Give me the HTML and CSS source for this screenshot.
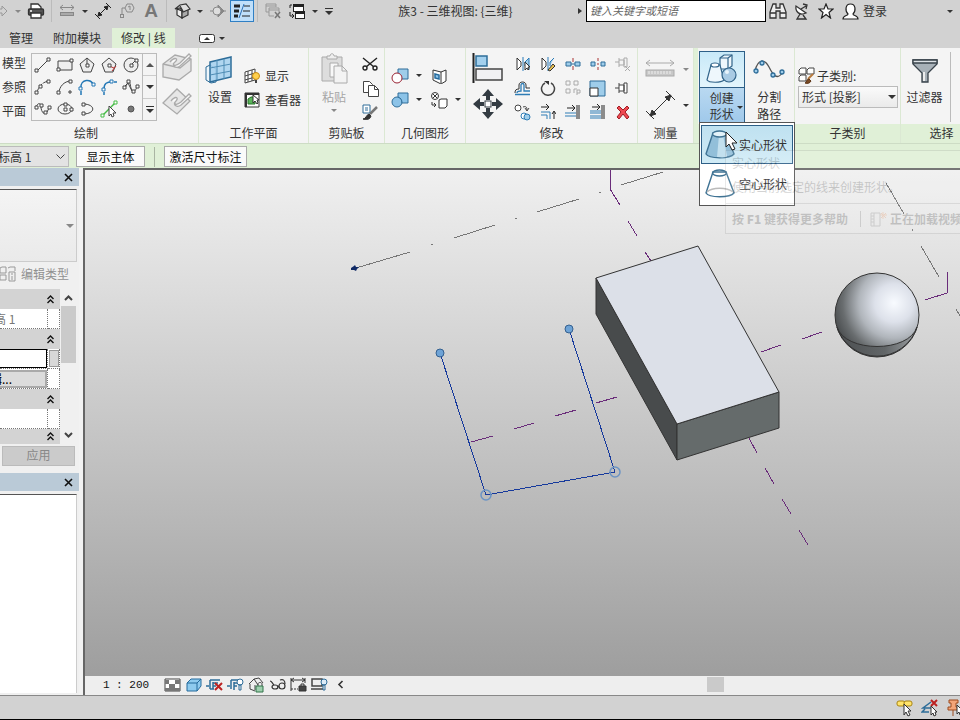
FILE: index.html
```html
<!DOCTYPE html>
<html lang="zh-CN">
<head>
  <meta charset="UTF-8">
  <meta name="viewport" content="width=device-width, initial-scale=1.0">
  <title>族3 - 三维视图: {三维}</title>
  <link rel="stylesheet" href="styles.css">
</head>
<body>
<div class="window">

  <header class="titlebar">
    <div class="quick">
      <button class="tool first" aria-label="重做"><svg width="16" height="16" viewBox="0 0 16 16" fill="none" stroke="#999"><path d="M2 6h6V3l5 5-5 5v-3H2z"/></svg></button>
      <button class="drop" aria-label="重做列表"><span class="caret dim"></span></button>
      <button class="tool" aria-label="打印"><svg width="18" height="16" viewBox="0 0 18 16" fill="none" stroke="#333" stroke-width="1.3"><path d="M4 6V1h7l3 3v2" fill="#fff"/><rect x="1.500" y="6" width="15" height="6" rx="1" fill="#555"/><path d="M4 10h10v5H4z" fill="#fff"/><path d="M3 8h2" stroke="#fff"/></svg></button>
      <span class="sep"></span>
      <button class="tool" aria-label="测量"><svg width="16" height="14" viewBox="0 0 16 14" fill="none" stroke="#888"><path d="M1 3.500h14M4 1L1 3.500 4 6M12 1l3 2.500L12 6"/><rect x="1.500" y="8.500" width="13" height="3" fill="#aaa"/></svg></button>
      <button class="drop" aria-label="测量列表"><span class="caret"></span></button>
      <button class="tool" aria-label="对齐尺寸标注"><svg width="18" height="18" viewBox="0 0 18 18" fill="none" stroke="#222"><path d="M4 14L14 4M1 12l5 5M12 1l5 5"/><path d="M4 14l1-4 3 3zM14 4l-4 1 3 3z" fill="#222"/></svg></button>
      <button class="tool" aria-label="标记"><svg width="16" height="16" viewBox="0 0 16 16" fill="none" stroke="#888"><path d="M8 1h5l2 4-2 4H8L6 5zM6 5H3v6"/><rect x="1.500" y="11.500" width="3" height="3"/><path d="M9 4l2-1v4"/></svg></button>
      <button class="tool letter" aria-label="文字">A</button>
      <span class="sep"></span>
      <button class="tool" aria-label="三维视图"><svg width="17" height="16" viewBox="0 0 17 16" stroke="#333" stroke-width="1.200"><path d="M3 6v6l5 3V8z" fill="#eee"/><path d="M8 8v7l6-3V6z" fill="#aaa"/><path d="M1 6l5-4 6-1 4 5-7 3-3-4z" fill="#ddd"/><path d="M6 3l3 5" fill="none"/></svg></button>
      <button class="drop" aria-label="三维视图列表"><span class="caret"></span></button>
      <button class="tool" aria-label="剖面"><svg width="16" height="16" viewBox="0 0 16 16" fill="none" stroke="#888"><path d="M8 2l6 6-6 6z" fill="#888"/><circle cx="7" cy="8" r="4" fill="#ddd"/><path d="M0 8h3M13 8h3"/></svg></button>
      <button class="tool on" aria-label="细线"><svg width="18" height="16" viewBox="0 0 18 16" fill="none" stroke="#222"><path d="M1 3h6M1 8h5M1 13h4" stroke-width="3"/><path d="M11 3h6M10 8h7M9 13h8"/><path d="M11 1L6 15" stroke="#2a6fb5"/></svg></button>
      <span class="sep"></span>
      <button class="tool" aria-label="关闭隐藏窗口"><svg width="16" height="16" viewBox="0 0 16 16" fill="none" stroke="#999"><path d="M4 9H1V1h10v3M1 3h10"/><path d="M9 13H4V5h10v4M4 7h10"/><path d="M10 9l5 6M15 9l-5 6" stroke="#777" stroke-width="1.500"/></svg></button>
      <button class="tool" aria-label="切换窗口"><svg width="17" height="17" viewBox="0 0 17 17" fill="none" stroke="#222"><rect x="4.500" y="1.500" width="10" height="7" fill="#fff"/><path d="M4 3h11" stroke-width="2"/><rect x="6.500" y="8.500" width="9" height="7" fill="#fff"/><path d="M6 10h10" stroke-width="2"/><path d="M1 5V2h2M1 9v4h4M3 11l2 2-2 2"/></svg></button>
      <button class="drop" aria-label="窗口列表"><span class="caret"></span></button>
      <button class="menu-btn" aria-label="自定义快速访问工具栏"><span class="bar"></span><span class="caret"></span></button>
    </div>
    <h1>族3 - 三维视图: {三维}</h1>
    <button class="drop" aria-label="展开搜索"><span class="caret right"></span></button>
    <input class="search" type="text" placeholder="键入关键字或短语" aria-label="搜索">
    <button class="tool" aria-label="查找"><svg width="18" height="18" viewBox="0 0 18 18" fill="#eee" stroke="#333" stroke-width="1.300"><path d="M4 2h3v4h4V2h3l3 8v6h-6V9H7v7H1v-6zM1 11h6M11 11h6"/></svg></button>
    <button class="tool" aria-label="通讯中心"><svg width="16" height="17" viewBox="0 0 16 17" fill="none" stroke="#333" stroke-width="1.300"><path d="M2 3c-1 6 4 10 10 7z" fill="#fff"/><path d="M7 6l5-3M9 1l4 1-1 4M6 11l-3 5h9l-3-4"/></svg></button>
    <button class="tool" aria-label="收藏夹"><svg width="16" height="16" viewBox="0 0 16 16" fill="#fff" stroke="#222" stroke-width="1.200"><path d="M8 1l2 5h5l-4 3.500L12.500 15 8 11.500 3.500 15 5 9.500 1 6h5z"/></svg></button>
    <button class="tool" aria-label="用户"><svg width="17" height="17" viewBox="0 0 17 17" fill="#fff" stroke="#222" stroke-width="1.200"><path d="M1 16c0-4 5-3 5-5-3-3-3-10 2.500-10S14 8 11 11c0 2 5 1 5 5z"/></svg></button>
    <button class="login">登录</button>
    <button class="drop last" aria-label="更多"><span class="caret"></span></button>
  </header>

  <nav class="tabs">
    <a href="#manage">管理</a>
    <a href="#addins">附加模块</a>
    <a href="#modify" class="active">修改 | 线</a>
    <button class="ribbon-toggle" aria-label="最小化功能区"><svg width="16" height="9" viewBox="0 0 16 9"><rect x=".5" y=".5" width="15" height="8" rx="2" fill="#fff" stroke="#333"/><path d="M5 6l3-3 3 3z" fill="#333"/></svg><span class="caret"></span></button>
  </nav>

  <div class="ribbon">
    <section class="panel draw">
      <div class="body">
        <div class="modes"><button>模型</button><button>参照</button><button>平面</button></div>
        <div class="gallery">
          <div class="shapes">
            <button aria-label="线"><svg width="18" height="18" viewBox="0 0 18 18" class="ink"><path d="M3 15L15 3"/><path class="node" d="M1 13h3v3H1zM13 2h3v3h-3z"/></svg></button>
            <button aria-label="矩形"><svg width="18" height="18" viewBox="0 0 18 18" class="ink"><path d="M2 5h14v9H2z" fill="#eee"/><path class="node" d="M1 12h3v3H1zM14 3h3v3h-3z"/></svg></button>
            <button aria-label="内接多边形"><svg width="18" height="18" viewBox="0 0 18 18" class="ink"><path d="M9 2l7 6-3 8H5L2 8zM9 2v8" fill="#eee"/><path class="node" d="M8 8h3v3H8z"/></svg></button>
            <button aria-label="外接多边形"><svg width="18" height="18" viewBox="0 0 18 18" class="ink"><path d="M9 2l7 6-3 8H5L2 8z" fill="#eee"/><path d="M9 10l5 2M12 15l4-5" stroke="#b33"/><path class="node" d="M8 8h3v3H8z"/></svg></button>
            <button aria-label="圆形"><svg width="18" height="18" viewBox="0 0 18 18" class="ink"><circle cx="9" cy="9" r="7" fill="#eee"/><path d="M9 9l5-5"/><path class="node" d="M8 8h3v3H8zM13 3h3v3h-3z"/></svg></button>
            <button aria-label="起点-终点-半径弧"><svg width="18" height="18" viewBox="0 0 18 18" class="ink"><path d="M3 15C4 9 8 4 15 3" stroke-dasharray="5 1"/><path class="node" d="M1 13h3v3H1zM5 7h3v3H5zM13 2h3v3h-3z"/></svg></button>
            <button aria-label="圆心-端点弧"><svg width="18" height="18" viewBox="0 0 18 18" class="ink"><path d="M3 15C3 9 8 3 15 3M12 14h4M14 12v4"/><path class="node" d="M1 13h3v3H1zM13 2h3v3h-3z"/></svg></button>
            <button aria-label="相切-端点弧"><svg width="18" height="18" viewBox="0 0 18 18" class="ink blue"><path d="M3 10C2 1 14 0 15 7M3 13v4"/><path class="node" d="M1 9h3v3H1zM14 5h3v3h-3z"/></svg></button>
            <button aria-label="圆角弧"><svg width="18" height="18" viewBox="0 0 18 18" class="ink blue"><path d="M4 11c0-6 3-7 8-7M14 4h3M4 14v3"/><path class="node" d="M2 10h3v3H2zM10 2h3v3h-3z"/></svg></button>
            <button aria-label="样条曲线"><svg width="18" height="18" viewBox="0 0 18 18" class="ink"><path d="M2 9c3 1 3-6 5-5s1 8 4 9 3-4 5-5M6 5l4 8M6 5L2 9"/><path class="node" d="M1 8h3v3H1zM5 2h3v3H5zM10 12h3v3h-3zM14 7h3v3h-3z"/></svg></button>
            <button aria-label="通过点的样条曲线"><svg width="18" height="18" viewBox="0 0 18 18" class="ink"><path d="M2 7c2-5 5-4 5 0s3 9 6 5l2-4"/><path class="node" d="M1 6h3v3H1zM6 4h3v3H6zM10 11h3v3h-3zM14 6h3v3h-3z"/></svg></button>
            <button aria-label="椭圆"><svg width="18" height="18" viewBox="0 0 18 18" class="ink"><ellipse cx="9" cy="9" rx="7" ry="5"/><path class="node" d="M8 3h3v3H8zM14 8h3v3h-3zM8 8h3v3H8z"/></svg></button>
            <button aria-label="半椭圆"><svg width="18" height="18" viewBox="0 0 18 18" class="ink"><path d="M5 4c13 0 13 10 0 10"/><path class="node" d="M4 3h3v3H4zM4 12h3v3H4z"/></svg></button>
            <button aria-label="拾取线"><svg width="18" height="18" viewBox="0 0 18 18" class="ink"><path d="M2 16L16 2" stroke="#4b4" stroke-width="1.500"/><path d="M1 14h3v3H1zM14 1h3v3h-3z" stroke="#4b4" fill="#fff"/><path d="M9 6v10l2-2 1 3 2-1-1-3h3z" fill="#fff"/></svg></button>
            <button aria-label="点图元"><svg width="18" height="18" viewBox="0 0 18 18"><circle cx="9" cy="9" r="3" fill="#777" stroke="#555"/></svg></button>
          </div>
          <div class="scroll">
            <button aria-label="上"><span class="caret up"></span></button>
            <button aria-label="下"><span class="caret wide"></span></button>
            <button aria-label="更多形状"><span class="bar"></span><span class="caret wide"></span></button>
          </div>
        </div>
        <div class="faces">
          <button aria-label="在面上绘制"><svg width="32" height="32" viewBox="0 0 32 32" fill="#e6e6e6" stroke="#aaa" stroke-width="1.300"><path d="M2 12L14 3l16 4v12l-12 9-16-3z"/><path d="M2 12l17 4 11-9" fill="none"/><path d="M9 10c5-6 9-3 5 0s0 5 5 1L28 2l2 2-11 10c-4 3-8 0-6-3" fill="#f8f8f8"/></svg></button>
          <button aria-label="在工作平面上绘制"><svg width="32" height="32" viewBox="0 0 32 32" fill="#e6e6e6" stroke="#aaa" stroke-width="1.300"><path d="M2 17L16 3l13 12-13 13z"/><path d="M10 15c5-6 8-3 5 0s0 5 5 1l8-8 2 2-10 9c-4 3-8 0-6-3" fill="#f8f8f8"/></svg></button>
        </div>
      </div>
      <h2>绘制</h2>
    </section>

    <section class="panel workplane">
      <div class="body">
        <button class="big"><svg width="30" height="30" viewBox="0 0 30 30" stroke="#2e6d99"><path d="M1 12l4-2 6 4v13l-5 1-5-3z" fill="#eef6fb"/><path d="M5 7l21-5v20L5 27z" fill="#a3d0ee" fill-opacity=".85" stroke-width="1.500"/><path d="M12 5v20M19 4v20M5 13l21-4M5 20l21-4" stroke="#4f8db5"/></svg>设置</button>
        <div class="stack">
          <button><svg width="16" height="16" viewBox="0 0 16 16" fill="#fff" stroke="#444"><path d="M1 4l10-3v11L1 15zM4 3v11M8 2v11M1 8l10-3M1 12l10-3"/><circle cx="12" cy="8" r="3.500" fill="#ffd04d" stroke="#c78a12"/><path d="M12 12v3" stroke-width="2"/></svg>显示</button>
          <button><svg width="16" height="16" viewBox="0 0 16 16" fill="#fff" stroke="#333"><path d="M1 1h14v14H1z"/><path d="M1 2h14M2 1v14" stroke-width="2"/><path d="M4 7l3-2h4v7H4z" fill="#5bb65b" stroke="#287328"/><path d="M9 3v8l2-2 2 3 1-1-1-3h2z"/></svg>查看器</button>
        </div>
      </div>
      <h2>工作平面</h2>
    </section>

    <section class="panel clipboard">
      <div class="body">
        <button class="big disabled" disabled><svg width="30" height="32" viewBox="0 0 30 32" fill="#ddd" stroke="#aaa"><path d="M3 4h20v24H3z"/><path d="M8 6V3h3c0-3 4-3 4 0h3v3z" fill="#eee"/><path d="M11 10h8v14h-8z" fill="#f8f8f8"/><path d="M15 13h8l5 5v12H15z" fill="#f3f3f3"/><path d="M23 13v5h5" fill="none"/></svg>粘贴<span class="caret dim"></span></button>
        <div class="stack">
          <button aria-label="剪切"><svg width="16" height="16" viewBox="0 0 16 16" fill="none" stroke="#222" stroke-width="1.400"><path d="M1 2l11 9M15 2L4 11"/><circle cx="3" cy="12" r="2"/><circle cx="13" cy="12" r="2"/></svg></button>
          <button aria-label="复制"><svg width="17" height="17" viewBox="0 0 17 17" fill="#fff" stroke="#444"><path d="M1.500 1.500h6l3 3v8h-9z"/><path d="M6.500 5.500h6l4 4v7h-10z"/><path d="M12.500 5.500v4h4" fill="none"/></svg></button>
          <button aria-label="匹配类型"><svg width="16" height="16" viewBox="0 0 16 16" fill="#fff" stroke="#333"><path d="M1 1h7v8H1z" stroke="#2e6d99"/><path d="M3 4h3M3 6h3" stroke="#2e6d99"/><path d="M15 3l-7 7" stroke-width="2.500" stroke="#777"/><path d="M1 15c3 0 3-4 6-5l2 2c-1 4-5 4-8 3z" fill="#333"/></svg></button>
        </div>
      </div>
      <h2>剪贴板</h2>
    </section>

    <section class="panel geometry">
      <div class="body">
        <div class="pairs">
          <button aria-label="剪切几何图形"><svg width="18" height="18" viewBox="0 0 18 18"><path d="M7 2h10v10H7z" fill="#9fcdea" stroke="#2e6d99"/><circle cx="6" cy="11" r="5" fill="#fff" stroke="#923"/></svg></button>
          <button class="drop" aria-label="剪切列表"><span class="caret"></span></button>
          <button aria-label="拆分面"><svg width="16" height="16" viewBox="0 0 16 16"><path d="M2 2l8 2 5-2v11l-5 3-8-4z" fill="#fff" stroke="#333"/><path d="M10 4v11" stroke="#333"/><path d="M4 6l4 1v4L4 10z" fill="#8fc5ea" stroke="#246a9c" stroke-width="1.500"/></svg></button>
          <span></span>
          <button aria-label="连接几何图形"><svg width="18" height="18" viewBox="0 0 18 18" fill="#8cc3e8" stroke="#2e6d99"><circle cx="6" cy="11" r="5"/><path d="M7 2h10v10h-6c0-3-1-5-4-6z"/></svg></button>
          <button class="drop" aria-label="连接列表"><span class="caret"></span></button>
          <button aria-label="填色"><svg width="18" height="18" viewBox="0 0 18 18" fill="#fff" stroke="#333"><circle cx="5" cy="5" r="3.500"/><path d="M3 3l4 4M7 3L3 7M2 11v3h4M4 12l2 2-2 2" fill="none"/><path d="M9 9l2-1h6v7l-2 2H9z"/></svg></button>
          <button class="drop" aria-label="填色列表"><span class="caret"></span></button>
        </div>
      </div>
      <h2>几何图形</h2>
    </section>

    <section class="panel modify">
      <div class="body">
        <div class="large">
          <button aria-label="对齐"><svg width="32" height="32" viewBox="0 0 32 32"><path d="M1.500 1v30" stroke="#222" stroke-width="2"/><path d="M4 4h11v10H4z" fill="#a3d0ee" stroke="#2e6d99" stroke-width="1.500"/><path d="M4 17h26v11H4z" fill="#f1f1f4" stroke="#444" stroke-width="1.500"/></svg></button>
          <button aria-label="移动"><svg width="32" height="32" viewBox="0 0 32 32" fill="#333b42"><path d="M16 1l6 7h-4v4h-4V8h-4zM16 31l6-7h-4v-4h-4v4h-4zM1 16l7-6v4h4v4H8v4zM31 16l-7-6v4h-4v4h4v4z"/><rect x="13" y="13" width="6" height="6" fill="#fff" stroke="#333b42"/></svg></button>
        </div>
        <div class="tools">
          <button aria-label="镜像 - 拾取轴"><svg width="16" height="16" viewBox="0 0 16 16" fill="#fff" stroke="#333"><path d="M2 2l4 4v4l-4 4z"/><path d="M14 2l-4 4v4l4 4z" fill="#9fcdea" stroke="#2a7bb8"/><path d="M8 1v14" stroke="#2a7bb8"/><path d="M10 6v8l2-2 1 2 1-1-1-2h2z"/></svg></button>
          <button aria-label="镜像 - 绘制轴"><svg width="16" height="16" viewBox="0 0 16 16" fill="#fff" stroke="#333"><path d="M2 2l4 4v4l-4 4z"/><path d="M14 2l-4 4v4" fill="#9fcdea" stroke="#2a7bb8"/><path d="M8 1v14" stroke="#2a7bb8"/><path d="M8 14l5-6 2 2-5 5z" fill="#eac353"/></svg></button>
          <button aria-label="拆分图元"><svg width="16" height="16" viewBox="0 0 16 16" fill="#9fcdea" stroke="#2e6d99"><path d="M1 6h5v4H1zM10 6h5v4h-5zM6 8h4"/><path d="M8 2v4M8 10v4" stroke="#a33"/></svg></button>
          <button aria-label="用间隙拆分"><svg width="16" height="16" viewBox="0 0 16 16" fill="#9fcdea" stroke="#2e6d99"><path d="M1 6h4v4H1zM11 6h4v4h-4z"/><path d="M8 2v3M8 7v2M8 11v3" stroke="#a33"/></svg></button>
          <button aria-label="解锁" disabled><svg width="16" height="16" viewBox="0 0 16 16" fill="none" stroke="#aaa"><path d="M0 6h4M4 2v9M4 4h5v5H4M9 2h3v9H9zM10 10l5 5M15 10l-5 5"/></svg></button>
          <button aria-label="偏移"><svg width="17" height="16" viewBox="0 0 17 16" fill="none"><path d="M1 13c0-3 1-4 4-4V5c0-4 7-4 7 0v3h4" stroke="#333"/><path d="M3 13c0-2 2-2 4-2V5c0-2 3-2 3 0v6h6M1 14.500h15" stroke="#2e7cb5" stroke-width="1.300"/></svg></button>
          <button aria-label="旋转"><svg width="16" height="16" viewBox="0 0 16 16" fill="none" stroke="#444" stroke-width="1.500"><path d="M5 3a6.500 6.500 0 1 0 6 0"/><path d="M4 1h5v4z" fill="#333" stroke="none"/></svg></button>
          <button aria-label="阵列" disabled><svg width="16" height="16" viewBox="0 0 16 16" fill="none" stroke="#aaa"><path d="M1 1h4v4H1zM9 1h4v4H9zM1 9h4v4H1zM9 13V9h3M12 15v-5h3v3h-3"/></svg></button>
          <button aria-label="缩放"><svg width="17" height="17" viewBox="0 0 17 17"><path d="M1 1h15v15H1z" fill="#9fcdea" stroke="#2e6d99"/><path d="M1 8h8v8H1z" fill="#fff" stroke="#333"/></svg></button>
          <button aria-label="锁定"><svg width="16" height="16" viewBox="0 0 16 16" fill="#fff" stroke="#444"><path d="M0 8h4M4 3v10M4 5h5v6H4M9 3h3v10H9z"/></svg></button>
          <button aria-label="复制图元"><svg width="17" height="17" viewBox="0 0 17 17" fill="#fff" stroke="#444"><circle cx="4" cy="4" r="3"/><path d="M9 3c3-1 4 0 4 3M11 4l2 3 2-3" fill="none"/><circle cx="10" cy="12" r="3" stroke="#2e7cb5"/><circle cx="13" cy="13" r="3" fill="#9fcdea" stroke="#2e7cb5"/></svg></button>
          <button aria-label="修剪/延伸为角"><svg width="16" height="16" viewBox="0 0 16 16" fill="none" stroke="#222"><path d="M1 3h8M6 0l3 3-3 3M14 15V8M12 10l2-3 2 3"/><path d="M1 8h9v7M1 11h6v4" stroke="#2e7cb5"/></svg></button>
          <button aria-label="修剪/延伸单个图元"><svg width="16" height="16" viewBox="0 0 16 16" fill="none" stroke="#222"><path d="M2 4h8M7 1l3 3-3 3M12 1v14M14 1v14"/><path d="M0 9h11M0 12h11" stroke="#2e7cb5"/></svg></button>
          <button aria-label="修剪/延伸多个图元"><svg width="16" height="16" viewBox="0 0 16 16" fill="none" stroke="#222"><path d="M2 3h8M7 0l3 3-3 3M12 1v14M14 1v14"/><path d="M0 7h11M0 9h11M0 12h11M0 14h11" stroke="#2e7cb5"/></svg></button>
          <button aria-label="删除"><svg width="16" height="16" viewBox="0 0 16 16"><path d="M2 4l2-2 4 4 4-4 2 2-4 4 4 5-2 2-4-5-4 5-2-2 4-5z" fill="#ee4a52" stroke="#a01c24"/></svg></button>
        </div>
      </div>
      <h2>修改</h2>
    </section>

    <section class="panel measure">
      <div class="body">
        <div class="pairs">
          <button aria-label="测量距离" disabled><svg width="30" height="22" viewBox="0 0 30 22" fill="none" stroke="#aaa"><path d="M1 5h28M5 2L1 5l4 3M25 2l4 3-4 3"/><rect x="1" y="12" width="28" height="6" fill="#c8c8c8"/><path d="M4 13v3M7 13v3M10 13v3M13 13v3M16 13v3M19 13v3M22 13v3M25 13v3" stroke="#eee"/></svg></button>
          <button class="drop" aria-label="测量选项"><span class="caret dim"></span></button>
          <button aria-label="尺寸标注"><svg width="30" height="30" viewBox="0 0 30 30" fill="#333" stroke="#333"><path d="M6 25L25 6M1 21l8 8M21 1l9 9"/><path d="M5 26l2-6 4 4zM26 5l-6 2 4 4z"/></svg></button>
          <button class="drop" aria-label="标注选项"><span class="caret"></span></button>
        </div>
      </div>
      <h2>测量</h2>
    </section>

    <section class="panel context shape">
      <div class="body">
        <div class="create">
          <button class="create-top" aria-label="创建形状"><svg width="34" height="32" viewBox="0 0 34 32" fill="#eef7fc" stroke="#33658a" stroke-width="1.200"><path d="M15 4l4-3h8v11l-4 3h-8z"/><path d="M15 4h8v11M23 4l4-3" fill="none"/><path d="M6 11h9l4 15c-3 3-15 3-17 0z"/><ellipse cx="10" cy="11" rx="4" ry="2" fill="#fff"/><circle cx="24" cy="21" r="7" fill="#a9cbe4"/><circle cx="22" cy="18" r="2" fill="#e8f4fb" stroke="none"/></svg></button>
          <button class="create-bottom">创建<br>形状<span class="caret"></span></button>
          <div class="menu">
            <button class="hot"><svg width="34" height="32" viewBox="0 0 34 32" stroke="#3f7394" stroke-width="1.400"><path d="M10 4L3 25c3 5 24 5 28 0L23 4z" fill="#92bfd9"/><path d="M16 6l-2 22c7 1 10 0 10-1L20 6z" fill="#c3e0ee" stroke="none"/><ellipse cx="16.500" cy="5" rx="7" ry="3" fill="#e4f3fa"/></svg>实心形状</button>
            <button><svg width="34" height="32" viewBox="0 0 34 32" fill="none" stroke="#3f7394" stroke-width="1.400"><path d="M10 4L3 25c3 5 24 5 28 0L23 4z" fill="#fff"/><ellipse cx="16.500" cy="5" rx="7" ry="3"/><path d="M4 24c5-5 20-5 26 0" stroke="#bbb"/></svg>空心形状</button>
            <div class="tooltip" role="tooltip">
              <strong>实心形状</strong>
              <p>使用当前选定的线来创建形状。</p>
              <div class="tip-foot"><span>按 <b>F1</b> 键获得更多帮助</span><span class="tip-video"><svg width="18" height="16" viewBox="0 0 18 16" fill="none" stroke="#555"><path d="M2 2h9v13H2zM5 2v13M2 5h3M2 8h3M2 11h3"/><path d="M14 1v7M11 4h7M12 2l5 5M17 2l-5 5" stroke="#f07020"/></svg>正在加载视频</span></div>
            </div>
            <svg class="pointer" width="14" height="20" viewBox="0 0 14 20"><path d="M1 1v15l3-3 3 6 3-1-3-6h5z" fill="#fff" stroke="#222"/></svg>
          </div>
        </div>
        <button class="big"><svg width="32" height="22" viewBox="0 0 32 22" fill="#9fcdea" stroke="#2e6d99" stroke-width="1.300"><path d="M2 12C5-1 12 0 16 8s8 14 14 5" fill="none" stroke="#555"/><circle cx="3" cy="12" r="2"/><circle cx="9" cy="4" r="2"/><circle cx="20" cy="16" r="2"/><circle cx="29" cy="13" r="2"/></svg><span>分割<br>路径</span></button>
      </div>
      <h2></h2>
    </section>

    <section class="panel context subcat">
      <div class="body">
        <label for="subcategory"><svg width="17" height="17" viewBox="0 0 17 17" fill="#fff" stroke="#444"><path d="M1 3l2-2h5v6H1zM9 3l2-2h5v6H9zM1 10l2-2h5v6H1z"/><path d="M15 7l-5 5" stroke="#b87a3d" stroke-width="2"/><path d="M7 16c2 0 1-4 4-4l2 2c-1 2-3 3-6 2z" fill="#7a4a25" stroke="#5d3517"/></svg>子类别:</label>
        <div class="select-wrap">
          <select id="subcategory"><option>形式 [投影]</option></select>
          <span class="caret wide"></span>
        </div>
      </div>
      <h2>子类别</h2>
    </section>

    <section class="panel context filter">
      <div class="body">
        <button class="big"><svg width="28" height="28" viewBox="0 0 28 28" fill="#a8b1b8" stroke="#39434b" stroke-width="1.300"><path d="M2 3h24v4L17 16v9h-6v-9L2 7z"/><path d="M2 3h24v3H2z" fill="#dde2e6"/><path d="M13 15v9" stroke="#eee" stroke-width="2"/></svg>过滤器</button>
        <span class="rule"></span>
      </div>
      <h2>选择</h2>
    </section>
  </div>

  <div class="options">
    <div class="select-wrap level">
      <select aria-label="放置平面"><option>标高 1</option></select>
      <svg class="chev" width="9" height="6" viewBox="0 0 9 6" fill="none" stroke="#444"><path d="M.5.5l4 4 4-4"/></svg>
    </div>
    <button>显示主体</button>
    <span class="rule"></span>
    <button class="wide-btn">激活尺寸标注</button>
  </div>

  <main class="workspace">
    <aside class="side">
      <div class="side-head"><button aria-label="关闭属性"><svg width="9" height="9" viewBox="0 0 9 9" stroke="#111" stroke-width="1.600"><path d="M1 1l7 7M8 1L1 8"/></svg></button></div>
      <button class="type-box" aria-label="类型选择器"><span class="caret dim wide"></span></button>
      <button class="edit-type" disabled><svg width="17" height="16" viewBox="0 0 17 16" fill="none" stroke="#999"><path d="M0 2l2-1h4v6H0zM8 2l2-1h5v4M0 9h6v5H0zM9 6h6v9H9zM11 8h2M11 11h2M11 13h2"/></svg>编辑类型</button>
      <div class="props">
        <table>
          <colgroup><col class="value"><col class="link"></colgroup>
          <tbody>
            <tr class="group"><th colspan="2"><svg class="fold" width="7" height="9" viewBox="0 0 7 9"><path d="M.5 4l3-3 3 3M.5 8l3-3 3 3"/></svg></th></tr>
            <tr><td class="clip">标高 1</td><td></td></tr>
            <tr class="group"><th colspan="2"><svg class="fold" width="7" height="9" viewBox="0 0 7 9"><path d="M.5 4l3-3 3 3M.5 8l3-3 3 3"/></svg></th></tr>
            <tr><td><input type="text" aria-label="可见"></td><td><button class="mini" aria-label="关联族参数"></button></td></tr>
            <tr><td><button class="edit">编辑...</button></td><td></td></tr>
            <tr class="group"><th colspan="2"><svg class="fold" width="7" height="9" viewBox="0 0 7 9"><path d="M.5 4l3-3 3 3M.5 8l3-3 3 3"/></svg></th></tr>
            <tr><td></td><td></td></tr>
            <tr class="group last"><th colspan="2"><svg class="fold" width="7" height="9" viewBox="0 0 7 9"><path d="M.5 4l3-3 3 3M.5 8l3-3 3 3"/></svg></th></tr>
          </tbody>
        </table>
        <div class="vbar">
          <svg width="9" height="6" viewBox="0 0 9 6" fill="none" stroke="#444" stroke-width="2"><path d="M1 5l3.500-3.500L8 5"/></svg>
          <span class="thumb"></span>
          <svg width="9" height="6" viewBox="0 0 9 6" fill="none" stroke="#444" stroke-width="2"><path d="M1 1l3.500 3.500L8 1"/></svg>
        </div>
      </div>
      <button class="apply" disabled>应用</button>
      <div class="side-head"><button aria-label="关闭项目浏览器"><svg width="9" height="9" viewBox="0 0 9 9" stroke="#111" stroke-width="1.600"><path d="M1 1l7 7M8 1L1 8"/></svg></button></div>
      <div class="browser"></div>
    </aside>

    <section class="view">
      <svg class="canvas" viewBox="85 170 875 506" preserveAspectRatio="xMidYMid slice">
        <defs>
          <radialGradient id="ball" gradientUnits="userSpaceOnUse" cx="894" cy="303" r="64">
            <stop offset="0" stop-color="#f8fbff"/>
            <stop offset=".3" stop-color="#dde1ea"/>
            <stop offset=".55" stop-color="#b0b5bb"/>
            <stop offset=".8" stop-color="#696d6f"/>
            <stop offset="1" stop-color="#45484a"/>
          </radialGradient>
          <linearGradient id="under">
            <stop offset="0" stop-color="#4b4e50"/>
            <stop offset=".6" stop-color="#626668"/>
            <stop offset="1" stop-color="#9ca0a3"/>
          </linearGradient>
        </defs>
        <!-- reference levels -->
        <path class="level-line" d="M356 268l54-16M431 244h2M454 238l41-13M515 218h2M537 212l42-13M599 192h2M621 185l42-13M886 183l18 31M912 229v2M921 246l18 31M956 309l4 7"/>
        <path d="M351 268l3-2 1-1 1 2h3l-2 2-1 2-2-1h-3z" fill="#102a66"/>
        <!-- reference planes -->
        <path class="plane" d="M610 170v19l10 16M628 221l9 15M645 252l6 9M749 438l8 15M765 468l9 16M782 499l9 15M799 530l9 15M471 442l22-6M514 429l20-6M555 416l21-6M596 403l21-6M761 352l20-7M802 339l20-7M925 300l22-7v-21"/>
        <g class="solid">
          <path d="M596 278l81 146v36l-81-146z" fill="#484b4c"/>
          <path d="M677 424l102-32v36l-102 32z" fill="#656b6b"/>
          <path d="M596 278l102-32 81 146-102 32z" fill="#dce0e8"/>
        </g>
        <circle cx="877" cy="315" r="42" fill="url(#ball)" stroke="#333"/>
        <path d="M837 327C845 353 909 353 917 327A42 42 0 0 1 837 327z" fill="url(#under)" stroke="#333"/>
        <path class="sketch" d="M440 353l46 142 129-23-46-143"/>
        <g class="grip"><circle cx="440" cy="353" r="4"/><circle cx="569" cy="329" r="4"/></g>
        <g class="grip open"><circle cx="486" cy="495" r="5"/><circle cx="615" cy="472" r="5"/></g>
      </svg>
      <div class="viewbar">
        <button class="scale">1 : 200</button>
        <button aria-label="详细程度"><svg width="17" height="14" viewBox="0 0 17 14"><path d="M1 1h15v12H1z" fill="#fff" stroke="#444"/><path d="M1 2h4v4H1zM11 2h5v4h-5zM5 6h6v4H5zM1 10h15v3H1z" fill="#777"/></svg></button>
        <button aria-label="视觉样式"><svg width="16" height="14" viewBox="0 0 16 14" fill="#8fcbee" stroke="#246a9c"><path d="M1 5l4-4h10v7l-4 5H1z"/><path d="M1 5h10v8M11 5l4-4" fill="none"/></svg></button>
        <button aria-label="裁剪视图"><svg width="17" height="15" viewBox="0 0 17 15" fill="none" stroke="#2e6d99"><path d="M0 9h3M4 3v9M4 3h10M4 12h4M7 5v7M7 6h5M7 9h3" stroke-width="1.500"/><path d="M9 6l7 7M16 6l-7 7" stroke="#b22" stroke-width="2"/></svg></button>
        <button aria-label="显示裁剪区域"><svg width="17" height="15" viewBox="0 0 17 15" fill="none" stroke="#2e6d99"><path d="M0 9h3M4 3v9M4 3h7M7 5v8M7 6h3M7 9h3" stroke-width="1.500"/><circle cx="13" cy="5" r="3" fill="#fff"/><path d="M12 8h2v5h-2z"/></svg></button>
        <button aria-label="锁定三维视图"><svg width="17" height="16" viewBox="0 0 17 16" fill="none" stroke="#444"><path d="M2 7v5l5 2M1 7l5-5 5-1 4 5M6 2l4 6M7 8v5"/><path d="M10 9V7c0-2 4-2 4 0v2"/><path d="M8 9h7v6H8z" fill="#9ecfae" stroke="#33754b"/></svg></button>
        <button aria-label="临时隐藏"><svg width="17" height="14" viewBox="0 0 17 14" fill="none" stroke="#333" stroke-width="1.200"><path d="M1 3c2 0 2 2 4 4M11 2c3-1 5 0 5 4M8 9l2-1"/><ellipse cx="6" cy="9" rx="3" ry="2"/><ellipse cx="13" cy="8" rx="3" ry="3"/></svg></button>
        <button aria-label="显示约束"><svg width="17" height="15" viewBox="0 0 17 15" fill="none" stroke="#333"><path d="M1 1v13M15 1v5M1 3h14M4 1L1 3l3 2M12 1l3 2-3 2"/><path d="M1 12h7" stroke-dasharray="2 1"/><path d="M9 9h7v5H9z" fill="#444"/><path d="M11 9V7h3v2"/></svg></button>
        <button aria-label="工作共享显示"><svg width="17" height="15" viewBox="0 0 17 15" fill="none" stroke="#444"><path d="M1 2h10v7H1zM0 12h12" stroke-width="1.500"/><circle cx="13" cy="5" r="3" fill="#dcebf7" stroke="#2e6d99"/><path d="M12 8h2v5h-2z" stroke="#2e6d99"/></svg></button>
        <button aria-label="收起"><svg width="7" height="9" viewBox="0 0 7 9" fill="none" stroke="#333" stroke-width="1.600"><path d="M5.500 1L2 4.500 5.500 8"/></svg></button>
        <div class="hbar"><span class="thumb"></span></div>
      </div>
    </section>
  </main>

  <footer class="status">
    <button aria-label="选择链接"><svg width="18" height="18" viewBox="0 0 18 18" fill="#ffe46b" stroke="#a88413"><rect x="1" y="2" width="8" height="5" rx="2"/><rect x="8" y="2" width="8" height="5" rx="2"/><path d="M8 5v11l2-3 2 4 2-1-2-4h3z" fill="#fff" stroke="#333"/></svg></button>
    <button aria-label="选择基线图元"><svg width="18" height="18" viewBox="0 0 18 18" fill="none" stroke="#2e6d99"><path d="M10 3L2 9h8M8 13H1l3-3" stroke-width="1.500"/><path d="M10 1l6 6M16 1l-6 6" stroke="#b22" stroke-width="2"/><path d="M10 7v9l2-2 1 3 2-1-1-3h2z" fill="#fff" stroke="#333"/></svg></button>
    <button aria-label="选择锁定图元"><svg width="18" height="18" viewBox="0 0 18 18" fill="#f3a578" stroke="#9c4a1f"><path d="M3 1h9v3h-2v4h3v3H2V8h3V4H3zM7 11v6"/><path d="M11 6v9l2-2 1 3 2-1-1-3h2z" fill="#fff" stroke="#333"/></svg></button>
  </footer>
</div>
</body>
</html>
```
FILE: styles.css
```css
* {
  box-sizing: border-box;
}
body {
  margin: 0;
  font-family: "Noto Sans CJK SC", sans-serif;
  font-size: 12px;
  line-height: 16px;
  color: #333;
}
button, input, select {
  font: inherit;
  color: inherit;
}
button {
  display: flex;
  align-items: center;
  justify-content: center;
  padding: 0;
  border: none;
  background: none;
  white-space: nowrap;
}
svg {
  display: block;
  flex: none;
}
h1, h2, p {
  margin: 0;
  font-size: 12px;
  font-weight: normal;
}
.window {
  display: flex;
  flex-direction: column;
  height: 100vh;
  overflow: hidden;
  background: #d2d2d2;
  border-bottom: 1px solid #000;
}

/* carets */
.caret {
  width: 0;
  height: 0;
  border: 3px solid transparent;
  border-top-color: #333;
  border-bottom: none;
}
.caret.dim {
  border-top-color: #888;
}
.caret.wide {
  border-width: 4px 4px 0;
}
.caret.up {
  border: 4px solid transparent;
  border-top: none;
  border-bottom-color: #555;
}
.caret.right {
  border: 3px solid transparent;
  border-left: 4px solid #333;
  border-right: none;
}
.bar {
  width: 8px;
  height: 1px;
  margin-bottom: 2px;
  background: #333;
}

/* title bar */
.titlebar {
  display: flex;
  align-items: center;
  flex: none;
  height: 22px;
  margin-bottom: 6px;
}
.titlebar h1 {
  flex: 1;
  text-align: center;
  white-space: nowrap;
}
.quick {
  display: flex;
  align-items: center;
}
.tool {
  width: 24px;
  height: 22px;
}
.tool.first {
  width: 20px;
  margin-left: -8px;
}
.tool.on {
  background: #bfdffa;
  border: 1px solid #2f7fc4;
}
.tool.letter {
  font-family: "Liberation Sans", sans-serif;
  font-size: 19px;
  font-weight: bold;
  color: #777;
}
.drop {
  width: 12px;
  height: 22px;
}
.drop.last {
  margin-right: 4px;
}
.sep {
  width: 1px;
  height: 22px;
  margin: 0 3px;
  background: #bbb;
}
.menu-btn {
  flex-direction: column;
  width: 16px;
}
.menu-btn .caret {
  border-width: 4px 4px 0;
}
.search {
  width: 180px;
  height: 22px;
  padding: 0 3px 3px;
  border: 1px solid #000;
  background: #fff;
  font-size: 11px;
}
.search::placeholder {
  color: #666;
  font-style: italic;
}
.login {
  width: 82px;
  justify-content: flex-start;
  padding-left: 1px;
}

/* tabs */
.tabs {
  display: flex;
  flex: none;
  height: 20px;
}
.tabs a {
  padding: 2px 9px;
  margin-right: 2px;
  color: #333;
  text-decoration: none;
}
.tabs .active {
  background: #e0f0d7;
}
.ribbon-toggle {
  gap: 4px;
  margin-left: 22px;
}

/* ribbon */
.ribbon {
  display: flex;
  flex: none;
  height: 95px;
  background: #f4f4f4;
}
.panel {
  display: flex;
  flex-direction: column;
  flex: none;
  border-right: 1px solid #dbe8d3;
}
.body {
  display: flex;
  height: 76px;
  padding-top: 4px;
}
.panel h2 {
  height: 19px;
  line-height: 18px;
  text-align: center;
}
.context h2 {
  background: #e0f0d7;
}
.big {
  flex-direction: column;
  justify-content: flex-start;
  line-height: 17px;
}
.big svg {
  margin-bottom: 3px;
}
.big .caret {
  margin-top: 4px;
}
.disabled {
  color: #a5a5a5;
}
.stack {
  display: flex;
  flex-direction: column;
}
.stack button {
  justify-content: flex-start;
  gap: 5px;
  height: 24px;
}
.pairs {
  display: grid;
}

.draw {
  width: 199px;
}
.draw h2 {
  padding-right: 26px;
}
.modes {
  display: flex;
  flex-direction: column;
  width: 31px;
}
.modes button {
  height: 24px;
  padding: 0 3px 2px 0;
}
.gallery {
  display: flex;
  width: 126px;
  height: 68px;
  margin-top: 1px;
  border: 1px solid #bbb;
}
.shapes {
  display: grid;
  grid-template-columns: repeat(5, 22px);
  grid-template-rows: repeat(3, 22px);
}
.ink {
  fill: none;
  stroke: #444;
}
.ink.blue {
  stroke: #2277b5;
  stroke-width: 1.5;
}
.node {
  fill: #fff;
  stroke-width: 1;
}
.scroll {
  flex: 1;
  display: flex;
  flex-direction: column;
  border-left: 1px solid #bbb;
}
.scroll button {
  flex: 1;
  flex-direction: column;
  border-bottom: 1px solid #ccc;
}
.scroll button:last-child {
  border-bottom: none;
}
.faces {
  display: flex;
  flex-direction: column;
  gap: 2px;
  padding-left: 4px;
}

.workplane {
  width: 110px;
}
.workplane .big {
  width: 42px;
  padding-top: 3px;
}
.workplane .stack {
  padding: 12px 0 0 3px;
}
.clipboard {
  width: 76px;
}
.clipboard .big {
  width: 50px;
  padding-top: 1px;
}
.clipboard .stack {
  padding-left: 3px;
}
.geometry {
  width: 81px;
}
.geometry .pairs {
  grid-template-columns: 26px 13px 26px 12px;
  grid-template-rows: 24px 24px;
  padding: 12px 0 0 2px;
}
.modify {
  width: 172px;
}
.large {
  display: flex;
  flex-direction: column;
  gap: 4px;
  padding-left: 6px;
}
.tools {
  display: grid;
  grid-template-columns: repeat(5, 25px);
  grid-template-rows: repeat(3, 24px);
  padding-left: 6px;
}
.measure {
  width: 56px;
}
.measure .pairs {
  grid-template-columns: 40px 12px;
  grid-template-rows: 36px 36px;
  padding-left: 2px;
}
.measure .pairs button {
  height: 34px;
}
.shape {
  width: 101px;
}
.shape .body {
  padding-top: 3px;
  border-left: 4px solid #e0f0d7;
}
.create {
  position: relative;
  width: 46px;
  height: 72px;
  margin-left: 1px;
  background: #c5e4f5;
  border: 1px solid #2d5f87;
}
.create-top {
  width: 100%;
  height: 35px;
  background: linear-gradient(#c8e9f8, #e3f5fc);
}
.create-bottom {
  position: relative;
  width: 100%;
  height: 36px;
  border-top: 1px solid #2d5f87;
  background: linear-gradient(#b9d9f1, #9fc8ea);
}
.create-bottom .caret {
  position: absolute;
  right: 1px;
  top: 18px;
}
.shape .big {
  width: 50px;
  padding-top: 8px;
}
.shape .big svg {
  margin-bottom: 7px;
}
.menu {
  position: absolute;
  z-index: 2;
  top: 70px;
  left: -1px;
  width: 96px;
  height: 84px;
  padding: 2px 1px;
  background: #fff;
  border: 1px solid #555;
}
.menu button {
  width: 100%;
  height: 39px;
  justify-content: flex-start;
  gap: 2px;
  padding: 1px 0 0 1px;
  border: 1px solid transparent;
}
.menu .hot {
  background: linear-gradient(#bfe1f0, #d0ebf6);
  border-color: #2d5f87;
}
.pointer {
  position: absolute;
  top: 8px;
  left: 25px;
}
.tooltip {
  position: absolute;
  top: 27px;
  left: 25px;
  width: 290px;
  height: 84px;
  padding: 4px 6px 0;
  background: rgba(255, 255, 255, 0.6);
  border: 1px solid #888;
  color: #111;
  line-height: 16px;
  opacity: 0.18;
}
.tooltip strong {
  display: block;
  margin-bottom: 8px;
  font-weight: normal;
}
.tip-foot {
  display: flex;
  gap: 12px;
  margin: 8px -6px 0;
  padding: 7px 6px 0;
  border-top: 1px solid #888;
  font-weight: bold;
}
.tip-video {
  display: flex;
  gap: 3px;
  padding-left: 8px;
  border-left: 1px solid #555;
}
.subcat {
  width: 106px;
}
.subcat .body {
  flex-direction: column;
  padding: 17px 2px 0 3px;
}
.subcat label {
  display: flex;
  align-items: center;
  gap: 2px;
  height: 21px;
}
.select-wrap {
  position: relative;
}
select {
  appearance: none;
  width: 100%;
  height: 22px;
  padding: 0 3px;
  border: 1px solid #bbb;
  border-radius: 0;
  background: linear-gradient(#fafafa, #eaeaea);
}
.select-wrap .caret {
  position: absolute;
  right: 2px;
  top: 9px;
}
.filter {
  flex: 1 0 82px;
}
.filter .big {
  width: 45px;
  padding: 5px 0 0 2px;
}
.filter .rule {
  width: 1px;
  height: 70px;
  margin-left: 4px;
  background: #bbb;
}

/* options bar */
.options {
  display: flex;
  flex: none;
  align-items: flex-end;
  height: 25px;
  padding-bottom: 1px;
  background: #e0f0d7;
  border-top: 1px solid #cddcc5;
}
.options button {
  width: 69px;
  height: 21px;
  margin-left: 7px;
  background: #fafafa;
  border: 1px solid #aaa;
  color: #111;
}
.options .wide-btn {
  width: 83px;
  margin-left: 9px;
}
.options .rule {
  width: 1px;
  height: 20px;
  margin-left: 9px;
  background: #aab5a3;
}
.level {
  width: 77px;
  margin-left: -8px;
}
.level select {
  display: block;
  height: 21px;
  padding-left: 5px;
  background: #e3e3e3;
}
.chev {
  position: absolute;
  right: 4px;
  top: 8px;
}

/* workspace */
.workspace {
  display: flex;
  flex: 1;
  min-height: 0;
  background: #f2f2f2;
}
.side {
  display: flex;
  flex-direction: column;
  flex: none;
  width: 79px;
  overflow: hidden;
  background: #f0f0f0;
}
.side-head {
  display: flex;
  flex: none;
  justify-content: flex-end;
  height: 18px;
  margin-bottom: 3px;
  padding-right: 6px;
  background: #bacad7;
}
.type-box {
  flex: none;
  width: 77px;
  height: 73px;
  justify-content: flex-end;
  padding-right: 2px;
  background: linear-gradient(#f4f4f4, #eaeaea);
  border-top: 1px solid #555;
  border-right: 1px solid #ccc;
  border-bottom: 1px solid #ccc;
}
.edit-type {
  flex: none;
  justify-content: flex-start;
  gap: 4px;
  height: 27px;
  padding-bottom: 4px;
  color: #909090;
}
.props {
  display: flex;
  flex: none;
  height: 155px;
}
.props table {
  width: 60px;
  height: 155px;
  table-layout: fixed;
  border-collapse: separate;
  border-spacing: 0;
  background: #fff;
}
.value {
  width: 48px;
}
.link {
  width: 12px;
}
.props th, .props td {
  height: 20px;
  padding: 0;
  line-height: 15px;
}
.props th {
  background: #d3d3d3;
}
.props td {
  overflow: hidden;
  border-right: 1px dotted #777;
  border-bottom: 1px dotted #777;
}
.props .last th {
  height: 15px;
}
.props .clip {
  text-indent: -18px;
  white-space: nowrap;
  color: #777;
}
.props input {
  display: block;
  width: 100%;
  height: 19px;
  border: 1px solid #000;
  border-left: none;
}
.props .mini {
  width: 10px;
  height: 17px;
  margin-left: 1px;
  background: #d8d8d8;
  border: 1px solid #999;
}
.props .edit {
  width: 67px;
  height: 18px;
  justify-content: flex-end;
  margin-left: -20px;
  padding-right: 33px;
  background: #dcdcdc;
  border: 2px solid #aaa;
  color: #000;
}
.fold {
  margin-left: 47px;
  fill: none;
  stroke: #111;
  stroke-width: 1.4;
}
.vbar {
  display: flex;
  flex-direction: column;
  align-items: center;
  width: 17px;
  padding: 6px 0;
}
.vbar .thumb {
  width: 15px;
  height: 57px;
  margin: 5px 0 auto;
  background: #cacaca;
}
.apply {
  flex: none;
  width: 73px;
  height: 20px;
  margin: 2px 0 7px 2px;
  padding-bottom: 2px;
  background: #cbcbcb;
  border: 1px solid #bbb;
  color: #888;
}
.browser {
  flex: 1;
  margin: 0 2px 2px 0;
  background: #fff;
  border-top: 1px solid #555;
  border-right: 1px solid #ccc;
}
.view {
  display: flex;
  flex: 1;
  flex-direction: column;
  min-width: 0;
  margin-left: 4px;
  border-top: 2px solid #666;
  border-left: 2px solid #666;
}
.canvas {
  flex: 1;
  width: 100%;
  min-height: 0;
  background: linear-gradient(#f0f0f0, #9e9e9e);
}
.level-line, .plane, .sketch {
  fill: none;
  shape-rendering: crispEdges;
}
.level-line {
  stroke: #777;
}
.plane {
  stroke: #6a2c7a;
}
.sketch {
  stroke: #16399c;
}
.solid {
  stroke: #333;
}
.grip {
  fill: #6ea3d6;
  stroke: #34608f;
}
.grip.open {
  fill: none;
  stroke: #6b93c4;
  stroke-width: 1.5;
}
.viewbar {
  display: flex;
  flex: none;
  align-items: center;
  height: 19px;
  padding-bottom: 2px;
  background: #eee;
}
.viewbar button {
  width: 21px;
}
.viewbar .scale {
  width: 77px;
  padding-left: 5px;
  font-family: "Liberation Mono", monospace;
  font-size: 11px;
  color: #111;
}
.hbar {
  flex: 1;
  display: flex;
  justify-content: center;
  padding-left: 120px;
}
.hbar .thumb {
  width: 17px;
  height: 15px;
  background: #cacaca;
}
.status {
  display: flex;
  flex: none;
  justify-content: flex-end;
  align-items: center;
  gap: 1px;
  height: 24px;
  border-top: 1px solid #888;
}
.status button {
  width: 24px;
  height: 22px;
}
.status button:last-child {
  margin-right: -7px;
}
```
